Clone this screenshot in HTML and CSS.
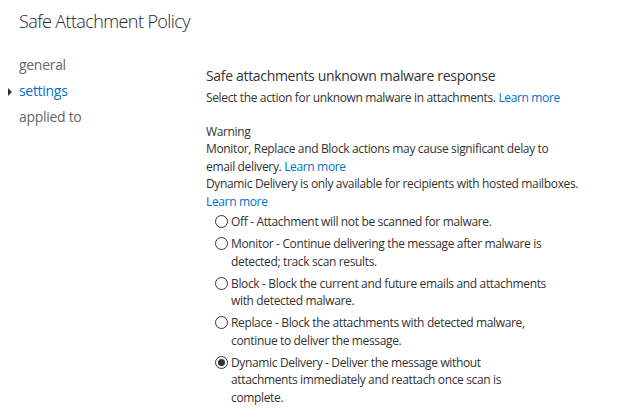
FILE: index.html
```html
<!DOCTYPE html>
<html lang="en">
<head>
<meta charset="utf-8">
<title>Safe Attachment Policy</title>
<link rel="stylesheet" href="styles.css">
</head>
<body>
<div class="page">
  <h1 class="title">Safe Attachment Policy</h1>
  <div class="layout">
    <nav class="nav">
      <a class="nav-item">general</a>
      <a class="nav-item active">settings</a>
      <a class="nav-item">applied to</a>
    </nav>
    <main class="content">
      <h2 class="section-title">Safe attachments unknown malware response</h2>
      <p class="desc">Select the action for unknown malware in attachments. <a class="link">Learn more</a></p>
      <div class="warning">
        <div>Warning</div>
        <div>Monitor, Replace and Block actions may cause significant delay to <span class="nowrap">email delivery.</span> <a class="link">Learn more</a></div>
        <div>Dynamic Delivery is only available for recipients with hosted mailboxes. <a class="link">Learn more</a></div>
      </div>
      <div class="options">
        <label class="option"><span class="radio"></span><span class="label">Off - Attachment will not be scanned for malware.</span></label>
        <label class="option"><span class="radio"></span><span class="label">Monitor - Continue delivering the message after malware is detected; track scan results.</span></label>
        <label class="option"><span class="radio"></span><span class="label">Block - Block the current and future emails and attachments with detected malware.</span></label>
        <label class="option"><span class="radio"></span><span class="label">Replace - Block the attachments with detected malware, continue to deliver the message.</span></label>
        <label class="option"><span class="radio checked"></span><span class="label">Dynamic Delivery - Deliver the message without attachments immediately and reattach once scan is complete.</span></label>
      </div>
    </main>
  </div>
</div>
</body>
</html>
```

FILE: styles.css
```css
html, body {
  margin: 0;
  padding: 0;
  background: #fff;
}
body {
  font-family: "Open Sans", "Noto Sans", sans-serif;
  color: #333;
}
.page {
  padding: 8px 0 0 19px;
}
.title {
  margin: 0;
  font-size: 18px;
  font-weight: 300;
  letter-spacing: -0.6px;
  color: #262626;
  line-height: 26px;
}
.layout {
  display: flex;
  margin-top: 18px;
}
.nav {
  display: flex;
  flex-direction: column;
  width: 187px;
  flex: none;
}
.nav-item {
  position: relative;
  font-size: 14px;
  letter-spacing: -0.3px;
  line-height: 26px;
  color: #666;
}
.nav-item.active {
  color: #0072c6;
}
.nav-item.active::before {
  content: "";
  position: absolute;
  left: -11px;
  top: 10px;
  border-left: 4px solid #333;
  border-top: 4px solid transparent;
  border-bottom: 4px solid transparent;
}
.content {
  padding-top: 14px;
  font-size: 12px;
  letter-spacing: -0.35px;
  line-height: 17.5px;
}
.section-title {
  margin: 0;
  font-size: 14px;
  font-weight: 400;
  letter-spacing: -0.32px;
  line-height: 20px;
  color: #333;
}
.desc {
  margin: 3px 0 0;
}
.link {
  color: #0072c6;
}
.nowrap {
  white-space: nowrap;
}
.warning {
  margin-top: 16px;
  width: 380px;
}
.options {
  margin-top: 3px;
  padding-left: 9px;
  display: flex;
  flex-direction: column;
  gap: 4.5px;
}
.option {
  display: flex;
  align-items: flex-start;
}
.radio {
  flex: none;
  box-sizing: border-box;
  width: 13px;
  height: 13px;
  margin-top: 2px;
  margin-right: 3px;
  border: 1px solid #333;
  border-radius: 50%;
  position: relative;
}
.radio.checked::after {
  content: "";
  position: absolute;
  left: 2px;
  top: 2px;
  width: 7px;
  height: 7px;
  border-radius: 50%;
  background: #333;
}
.label {
  width: 318px;
}
```
